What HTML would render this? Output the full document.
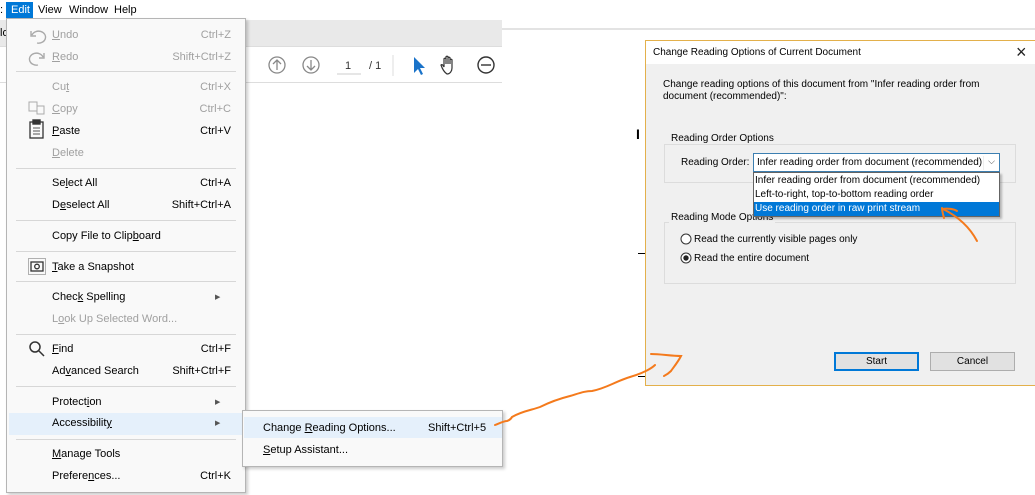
<!DOCTYPE html>
<html><head><meta charset="utf-8"><style>
*{margin:0;padding:0;box-sizing:border-box}
body{width:1035px;height:495px;overflow:hidden;background:#fff;font-family:"Liberation Sans",sans-serif;font-size:11px;color:#000;position:relative}
.a{position:absolute;white-space:nowrap}
.mi{position:absolute;left:52px;white-space:nowrap;font-size:11px}
.dis{color:#a0a0a0}
.sep{position:absolute;left:16px;width:220px;height:1px;background:#d7d7d7}
.arr{position:absolute;left:215px;font-size:7px;color:#555}
.d{font-size:10px}
</style></head><body>
<div class="a" style="left:0;top:0;width:502px;height:20px;background:#fff"></div>
<div class="a" style="left:0;top:20px;width:502px;height:27px;background:#e9e9e9;border-bottom:1px solid #ddd"></div>
<div class="a" style="left:0;top:47px;width:502px;height:36px;background:#fff;border-bottom:1px solid #ddd"></div>
<div class="a" style="left:502px;top:28px;width:533px;height:2px;background:#e3e3e3"></div>
<div class="a" style="left:6px;top:2px;width:27px;height:17px;background:#0078d7;color:#fff;padding:2px 0 0 5px">Edit</div>
<div class="a" style="left:38px;top:4px">View</div>
<div class="a" style="left:69px;top:4px">Window</div>
<div class="a" style="left:114px;top:4px">Help</div>
<div class="a" style="left:0;top:4px">:</div>
<div class="a" style="left:0;top:27px">lo</div>
<svg class="a" style="left:265px;top:52px" width="240" height="28">
<g fill="none" stroke="#888" stroke-width="1.3">
<circle cx="12" cy="13" r="8"/><path d="M12 18V8M8 12l4-4 4 4"/>
<circle cx="46" cy="13" r="8"/><path d="M46 8v10M42 14l4 4 4-4"/>
</g>
<line x1="72" y1="22" x2="96" y2="22" stroke="#ccc"/>
<text x="80" y="17" font-family="Liberation Sans" font-size="11" fill="#333">1</text>
<text x="104" y="17" font-family="Liberation Sans" font-size="11" fill="#333">/ 1</text>
<line x1="128" y1="3" x2="128" y2="24" stroke="#ddd"/>
<path d="M149 5v16l4-4 3 6 2-1-3-6h5z" fill="#1a73c9"/>
<path d="M182 22c-3-2-5-6-6-9 1-1 2 0 3 2V7c0-1 2-1 2 0v5V5c0-1 2-1 2 0v7V6c0-1 2-1 2 0v6V8c0-1 2-1 2 0v8c0 3-2 6-5 6z" fill="none" stroke="#333" stroke-width="1.2"/>
<circle cx="221" cy="13" r="8" fill="none" stroke="#333" stroke-width="1.4"/><path d="M216 13h10" stroke="#333" stroke-width="1.4"/>
</svg>
<div class="a" style="left:636px;top:126px;width:9px;height:14px;font-weight:bold;font-size:14px">I</div>
<div class="a" style="left:638px;top:253px;width:7px;height:1px;background:#000"></div>
<div class="a" style="left:638px;top:376px;width:7px;height:1px;background:#000"></div>
<div class="a" style="left:6px;top:18px;width:240px;height:475px;background:#f9f9f9;border:1px solid #b5b5b5;box-shadow:2px 2px 3px rgba(0,0,0,.2)">
<div class="a" style="left:2px;top:394px;width:234px;height:22px;background:#e5f0fb"></div>
</div>
<div style="position:absolute;left:0;top:0">
<svg class="a" style="left:27px;top:26px" width="22" height="160" fill="none" stroke="#aaa" stroke-width="1.4">
<path d="M4 5v5h5M5 9a7 6 0 1 1 5 8"/>
<path d="M17 27v5h-5M16 31a7 6 0 1 0-5 8"/>
<rect x="2" y="76" width="8" height="9" stroke-width="1"/><rect x="10" y="80" width="7" height="8" stroke-width="1"/>
<rect x="3" y="96" width="13" height="16" stroke="#333" stroke-width="1.3"/><rect x="6" y="94" width="7" height="4" fill="#333" stroke="#333"/><path d="M6 102h7M6 105h7M6 108h7" stroke="#555" stroke-width="1"/>
</svg>
<div class="mi dis" style="top:29px"><u>U</u>ndo</div><div class="mi dis" style="top:29px;left:170px;width:61px;text-align:right">Ctrl+Z</div>
<div class="mi dis" style="top:51px"><u>R</u>edo</div><div class="mi dis" style="top:51px;left:150px;width:81px;text-align:right">Shift+Ctrl+Z</div>
<div class="sep" style="top:71px"></div>
<div class="mi dis" style="top:81px">Cu<u>t</u></div><div class="mi dis" style="top:81px;left:170px;width:61px;text-align:right">Ctrl+X</div>
<div class="mi dis" style="top:103px"><u>C</u>opy</div><div class="mi dis" style="top:103px;left:170px;width:61px;text-align:right">Ctrl+C</div>
<div class="mi" style="top:125px"><u>P</u>aste</div><div class="mi" style="top:125px;left:170px;width:61px;text-align:right">Ctrl+V</div>
<div class="mi dis" style="top:147px"><u>D</u>elete</div>
<div class="sep" style="top:168px"></div>
<div class="mi" style="top:177px">Se<u>l</u>ect All</div><div class="mi" style="top:177px;left:170px;width:61px;text-align:right">Ctrl+A</div>
<div class="mi" style="top:199px">D<u>e</u>select All</div><div class="mi" style="top:199px;left:150px;width:81px;text-align:right">Shift+Ctrl+A</div>
<div class="sep" style="top:220px"></div>
<div class="mi" style="top:230px">Copy File to Clip<u>b</u>oard</div>
<div class="sep" style="top:251px"></div>
<svg class="a" style="left:27px;top:257px" width="20" height="20"><rect x="1.5" y="1.5" width="17" height="16" fill="none" stroke="#666" stroke-dasharray="1 1"/><rect x="4" y="5" width="12" height="9" fill="none" stroke="#333" stroke-width="1.3"/><circle cx="10" cy="9.5" r="2.3" fill="none" stroke="#333" stroke-width="1.3"/></svg>
<div class="mi" style="top:261px"><u>T</u>ake a Snapshot</div>
<div class="sep" style="top:281px"></div>
<div class="mi" style="top:291px">Chec<u>k</u> Spelling</div><div class="arr" style="top:293px">▶</div>
<div class="mi dis" style="top:313px">L<u>o</u>ok Up Selected Word...</div>
<div class="sep" style="top:334px"></div>
<svg class="a" style="left:28px;top:340px" width="18" height="18" fill="none" stroke="#333" stroke-width="1.5"><circle cx="7" cy="7" r="5"/><path d="M11 11l5 5"/></svg>
<div class="mi" style="top:343px"><u>F</u>ind</div><div class="mi" style="top:343px;left:170px;width:61px;text-align:right">Ctrl+F</div>
<div class="mi" style="top:365px">Ad<u>v</u>anced Search</div><div class="mi" style="top:365px;left:150px;width:81px;text-align:right">Shift+Ctrl+F</div>
<div class="sep" style="top:386px"></div>
<div class="mi" style="top:396px">Protect<u>i</u>on</div><div class="arr" style="top:398px">▶</div>
<div class="mi" style="top:417px">Accessibilit<u>y</u></div><div class="arr" style="top:419px">▶</div>
<div class="sep" style="top:439px"></div>
<div class="mi" style="top:448px"><u>M</u>anage Tools</div>
<div class="mi" style="top:470px">Prefere<u>n</u>ces...</div><div class="mi" style="top:470px;left:170px;width:61px;text-align:right">Ctrl+K</div>
</div>
<div class="a" style="left:242px;top:410px;width:261px;height:57px;background:#f9f9f9;border:1px solid #b5b5b5;box-shadow:2px 2px 3px rgba(0,0,0,.2)">
<div class="a" style="left:1px;top:6px;width:258px;height:21px;background:#e5f0fb"></div>
<div class="a" style="left:20px;top:11px">Change <u>R</u>eading Options...</div>
<div class="a" style="left:185px;top:11px">Shift+Ctrl+5</div>
<div class="a" style="left:20px;top:33px"><u>S</u>etup Assistant...</div>
</div>
<div class="a" style="left:645px;top:40px;width:390px;height:346px;background:#f0f0f0;border:1px solid #e3b04b;border-right:none">
<div class="a" style="left:0;top:0;width:389px;height:23px;background:#fff"></div>
<div class="a d" style="left:7px;top:6px">Change Reading Options of Current Document</div>
<div class="a" style="left:370px;top:1px;font-size:18px;color:#222">×</div>
<div class="a d" style="left:17px;top:38px;line-height:12px">Change reading options of this document from "Infer reading order from<br>document (recommended)":</div>
<div class="a" style="left:18px;top:103px;width:352px;height:39px;border:1px solid #dcdcdc"></div>
<div class="a d" style="left:23px;top:92px;background:#f0f0f0;padding:0 2px">Reading Order Options</div>
<div class="a d" style="left:35px;top:116px">Reading Order:</div>
<div class="a" style="left:107px;top:112px;width:247px;height:19px;background:#fff;border:1px solid #3c7fb1"><span class="a d" style="left:3px;top:3px">Infer reading order from document (recommended)</span><span class="a" style="left:229px;top:2px;width:16px;height:14px;background:#fff;border-left:1px solid #eee;font-size:9px;color:#444;text-align:center">⌵</span></div>
<div class="a" style="left:18px;top:181px;width:352px;height:62px;border:1px solid #dcdcdc"></div>
<div class="a d" style="left:23px;top:171px;background:#f0f0f0;padding:0 2px">Reading Mode Options</div>
<div class="a" style="left:107px;top:131px;width:247px;height:45px;background:#fff;border:1px solid #646464;box-shadow:2px 2px 2px rgba(0,0,0,.25)">
<div class="a d" style="left:1px;top:2px">Infer reading order from document (recommended)</div>
<div class="a d" style="left:1px;top:16px">Left-to-right, top-to-bottom reading order</div>
<div class="a d" style="left:0;top:29px;width:245px;height:14px;background:#0078d7;color:#fff;padding:1px 0 0 1px">Use reading order in raw print stream</div>
</div>
<svg class="a" style="left:33px;top:191px" width="14" height="35"><circle cx="7" cy="7" r="5" fill="#fff" stroke="#333"/><circle cx="7" cy="26" r="5" fill="#fff" stroke="#333"/><circle cx="7" cy="26" r="2.7" fill="#222"/></svg>
<div class="a d" style="left:48px;top:193px">Read the currently visible pages only</div>
<div class="a d" style="left:48px;top:212px">Read the entire document</div>
<div class="a d" style="left:188px;top:311px;width:85px;height:19px;background:#e1e1e1;border:2px solid #0078d7;text-align:center;padding-top:2px">Start</div>
<div class="a d" style="left:284px;top:311px;width:85px;height:19px;background:#e1e1e1;border:1px solid #adadad;text-align:center;padding-top:3px">Cancel</div>
</div>
<svg class="a" style="left:0;top:0" width="1035" height="495" fill="none" stroke="#f47a1c" stroke-width="2" stroke-linecap="round">
<path d="M495 425c5-2 9-4 12-4 3-1 4-2 5-4 10-6 20-7 28-10 10-5 22-9 30-11 10-3 15-5 22-5 15-3 22-9 38-14 14-4 22-9 25-12"/>
<path d="M651 354c10 0 20 2 30 2-3 6-8 12-10 15-3 3-5 4-7 5"/>
<path d="M942 209c6-1 12 0 15 2M942 208c0 3 1 6 2 10M943 209c12 6 25 15 34 32"/>
</svg>
</body></html>
